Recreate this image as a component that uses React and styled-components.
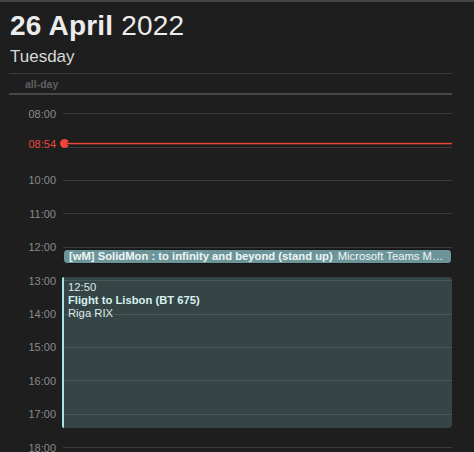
import React from 'react';
import styled, { createGlobalStyle } from 'styled-components';

const HOUR = 33.4;
const FIRST_HOUR = 8;

const GlobalStyle = createGlobalStyle`
  html, body {
    margin: 0;
    padding: 0;
    background: #1e1e1e;
  }
  body {
    font-family: "Liberation Sans", Arial, sans-serif;
    -webkit-font-smoothing: antialiased;
  }
`;

const Page = styled.div`
  width: 474px;
  height: 452px;
  overflow: hidden;
  background: #1e1e1e;
  border-top: 2px solid #444;
  box-sizing: border-box;
`;

const Header = styled.header`
  padding: 8px 0 0 10px;
`;

const Title = styled.h1`
  margin: 0;
  font-size: 28px;
  line-height: 32px;
  font-weight: 400;
  color: #ececec;
  letter-spacing: 0.2px;

  strong {
    font-weight: 700;
  }
`;

const Weekday = styled.h2`
  margin: 5px 0 0;
  font-size: 17px;
  line-height: 20px;
  font-weight: 400;
  color: #d8d8d8;
`;

const AllDay = styled.div`
  margin: 6px 22px 0 9px;
  height: 19px;
  border-top: 1px solid #383838;
  border-bottom: 2px solid #474747;
  display: flex;
  align-items: center;
  padding-left: 16px;
  font-size: 10.5px;
  font-weight: 700;
  color: #5e5e5e;
`;

const Timeline = styled.div`
  position: relative;
  padding: 2px 22px 0 9px;
`;

const HourRow = styled.div`
  height: ${HOUR}px;
  display: flex;
  align-items: center;
  gap: 7px;
`;

const HourLabel = styled.span`
  width: 47px;
  text-align: right;
  font-size: 11px;
  color: ${p => (p.$now ? '#e8473e' : '#8a8a8a')};
  flex-shrink: 0;
`;

const HourLine = styled.div`
  flex: 1;
  height: 1px;
  background: #3a3a3a;
`;

const NowMarker = styled.div`
  position: absolute;
  left: 9px;
  right: 22px;
  display: flex;
  align-items: center;
  gap: 2px;
  transform: translateY(-50%);
`;

const NowDot = styled.span`
  width: 9px;
  height: 9px;
  border-radius: 50%;
  background: #f0443b;
  margin-left: 2px;
  flex-shrink: 0;
`;

const NowLine = styled.div`
  flex: 1;
  height: 1px;
  background: #e8473e;
  box-shadow: 0 1px 0 #5a2a28, 0 -1px 0 #4a2422;
  margin-left: -4px;
`;

const Event = styled.div`
  position: absolute;
  left: ${p => p.$left}px;
  right: 22px;
  box-sizing: border-box;
  overflow: hidden;
  font-size: 11.25px;
`;

const BarEvent = styled(Event)`
  height: 15px;
  background: #6d9599;
  border: 1px solid #151818;
  border-radius: 4px;
  padding: 0 3px 0 5px;
  line-height: 13px;
  white-space: nowrap;
  text-overflow: ellipsis;
  color: #eef5f5;

  b {
    font-weight: 700;
    margin-right: 5px;
  }
`;

const BlockEvent = styled(Event)`
  background: rgba(110, 160, 160, 0.3);
  border-left: 2px solid #a6e2e8;
  border-radius: 2px 4px 4px 2px;
  padding: 4px 0 0 4px;
  line-height: 13px;
  color: #dcebeb;
`;

const EventTitle = styled.div`
  font-weight: 700;
  color: #d6f1f3;
`;

const hours = [8, 9, 10, 11, 12, 13, 14, 15, 16, 17, 18];
const pad = n => String(n).padStart(2, '0');
const yFor = h => 2 + (h - FIRST_HOUR) * HOUR + HOUR / 2;

export default function App() {
  return (
    <>
      <GlobalStyle />
      <Page>
        <Header>
          <Title>
            <strong>26 April</strong> 2022
          </Title>
          <Weekday>Tuesday</Weekday>
        </Header>
        <AllDay>all-day</AllDay>
        <Timeline>
          {hours.map(h => (
            <HourRow key={h}>
              <HourLabel>{h === 9 ? '' : `${pad(h)}:00`}</HourLabel>
              <HourLine />
            </HourRow>
          ))}
          <NowMarker style={{ top: yFor(8 + 54 / 60) }}>
            <HourLabel $now>08:54</HourLabel>
            <NowDot />
            <NowLine />
          </NowMarker>
          <BarEvent $left={63} style={{ top: 154 }}>
            <b>[wM] SolidMon : to infinity and beyond (stand up)</b>
            Microsoft Teams Meeting
          </BarEvent>
          <BlockEvent $left={62} style={{ top: 182, height: 151 }}>
            <div>12:50</div>
            <EventTitle>Flight to Lisbon (BT 675)</EventTitle>
            <div>Riga RIX</div>
          </BlockEvent>
        </Timeline>
      </Page>
    </>
  );
}
